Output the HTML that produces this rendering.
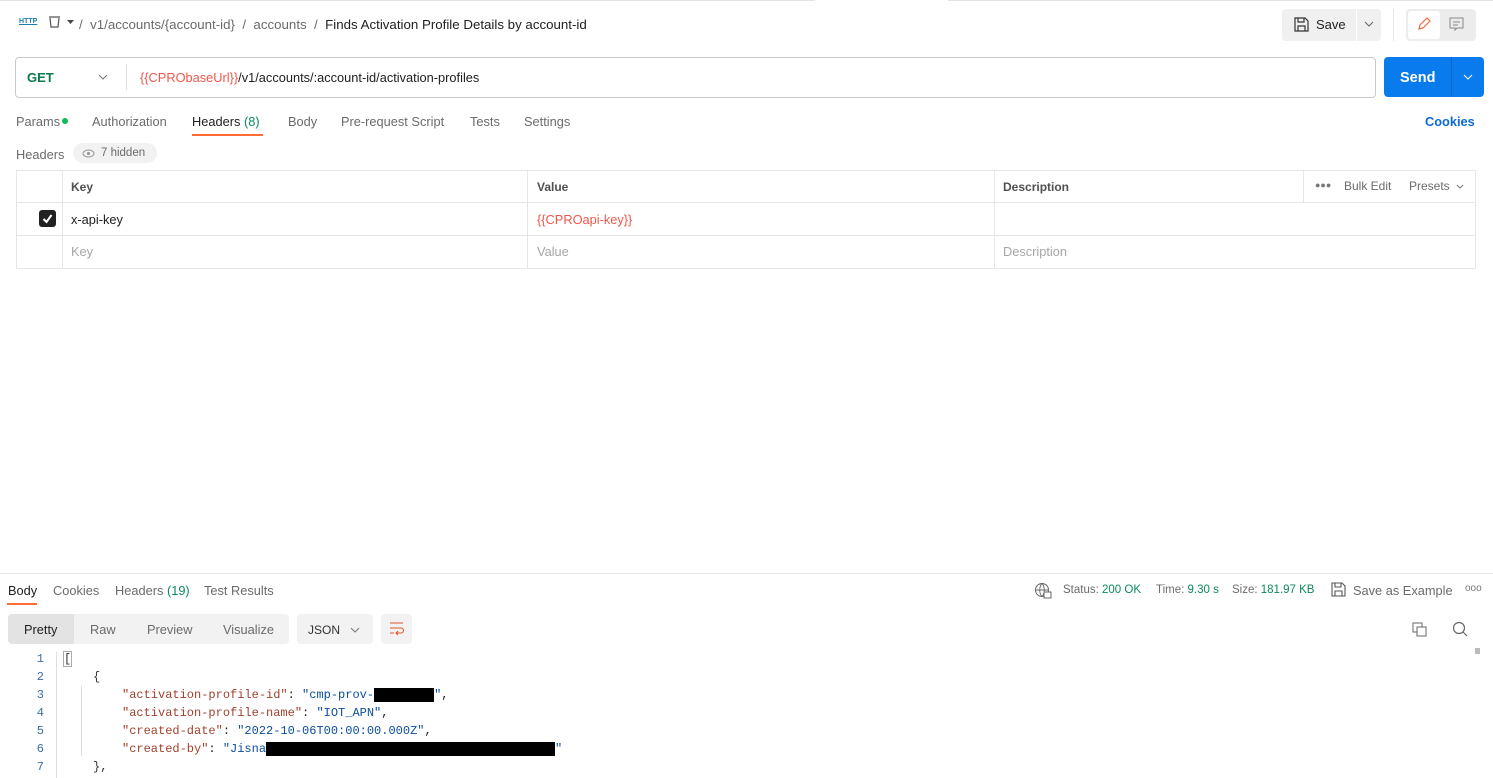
<!DOCTYPE html>
<html><head><meta charset="utf-8"><style>
*{box-sizing:border-box;margin:0;padding:0}
body{width:1493px;height:778px;overflow:hidden;background:#fff;font-family:"Liberation Sans",sans-serif;font-size:12.8px;color:#212121;position:relative}
.a{position:absolute;white-space:nowrap}
.g{color:#6b6b6b}
.mono{font-family:"Liberation Mono",monospace;font-size:12px}
.ln{position:absolute;left:0;width:44px;text-align:right;color:#3a6ea5;font-family:"Liberation Mono",monospace;font-size:12px}
.k{color:#a0412d}.v{color:#0b4ea2}
</style></head><body>
<div class="a" style="left:0;top:0;width:815px;height:1px;background:#e4e4e4"></div>
<div class="a" style="left:948px;top:0;width:545px;height:1px;background:#e4e4e4"></div>
<!-- top breadcrumb -->
<div class="a" style="left:19px;top:18px;font-size:7px;color:#1b7fa6;font-weight:bold;text-decoration:underline">HTTP</div>
<svg class="a" style="left:47px;top:15px" width="30" height="14"><path d="M2 2h11M3 3l1 9h7l1-9" fill="none" stroke="#555" stroke-width="1.2"/><path d="M20 5h7l-3.5 4z" fill="#444"/></svg>
<div class="a" style="left:79px;top:17px;font-size:13.3px"><span class="g">/ &nbsp;v1/accounts/{account-id} &nbsp;/ &nbsp;accounts &nbsp;/ </span>&nbsp;<span style="color:#212121">Finds Activation Profile Details by account-id</span></div>
<!-- save -->
<div class="a" style="left:1282px;top:9px;width:74px;height:32px;background:#f0f0f0;border-radius:4px 0 0 4px"></div>
<div class="a" style="left:1357px;top:9px;width:24px;height:32px;background:#f0f0f0;border-radius:0 4px 4px 0"></div>
<svg class="a" style="left:1294px;top:17px" width="15" height="15"><path d="M1 1h10l3 3v10H1z M4 1v4h6V1 M4 14V9h7v5" fill="none" stroke="#333" stroke-width="1.2"/></svg>
<div class="a" style="left:1316px;top:17px;font-size:13px">Save</div>
<svg class="a" style="left:1364px;top:21px" width="10" height="6"><path d="M1 1l4 4 4-4" fill="none" stroke="#666"/></svg>
<div class="a" style="left:1393px;top:9px;width:1px;height:32px;background:#e6e6e6"></div>
<div class="a" style="left:1406px;top:9px;width:70px;height:32px;background:#ececec;border-radius:4px"></div>
<div class="a" style="left:1408px;top:11px;width:32px;height:28px;background:#fff;border-radius:3px"></div>
<svg class="a" style="left:1416px;top:16px" width="16" height="16"><path d="M3 13l1-4 7-7 3 3-7 7z" fill="none" stroke="#f06b3c" stroke-width="1.2"/></svg>
<svg class="a" style="left:1449px;top:17px" width="15" height="15"><path d="M1 1h13v10H8l-2 2v-2H1z M4 5h7M4 8h5" fill="none" stroke="#888" stroke-width="1"/></svg>
<!-- url bar -->
<div class="a" style="left:15px;top:57px;width:1361px;height:41px;border:1px solid #c9c9c9;border-radius:4px"></div>
<div class="a" style="left:27px;top:70px;font-size:13px;font-weight:bold;color:#0b7a4b">GET</div>
<svg class="a" style="left:98px;top:74px" width="10" height="6"><path d="M1 1l4 4 4-4" fill="none" stroke="#777"/></svg>
<div class="a" style="left:126px;top:64px;width:1px;height:26px;background:#e3e3e3"></div>
<div class="a" style="left:140px;top:70px;font-size:12.8px"><span style="color:#f0574b">{{CPRObaseUrl}}</span>/v1/accounts/:account-id/activation-profiles</div>
<div class="a" style="left:1384px;top:57px;width:100px;height:40px;background:#097bed;border-radius:4px"></div>
<div class="a" style="left:1451px;top:57px;width:1px;height:40px;background:#0867c9"></div>
<div class="a" style="left:1400px;top:70px;color:#fff;font-weight:bold;font-size:14.5px">Send</div>
<svg class="a" style="left:1463px;top:74px" width="10" height="6"><path d="M1 1l4 4 4-4" fill="none" stroke="#fff"/></svg>
<!-- tabs -->
<div class="a g" style="left:16px;top:114px">Params</div>
<div class="a" style="left:62px;top:118px;width:6px;height:6px;border-radius:50%;background:#0cbb52"></div>
<div class="a g" style="left:92px;top:114px">Authorization</div>
<div class="a" style="left:192px;top:114px">Headers <span style="color:#0b8a5b">(8)</span></div>
<div class="a" style="left:192px;top:134px;width:71px;height:2px;background:#ff6c37"></div>
<div class="a g" style="left:288px;top:114px">Body</div>
<div class="a g" style="left:341px;top:114px">Pre-request Script</div>
<div class="a g" style="left:470px;top:114px">Tests</div>
<div class="a g" style="left:524px;top:114px">Settings</div>
<div class="a" style="left:1425px;top:114px;color:#0b6ad6;font-weight:bold">Cookies</div>
<div class="a g" style="left:16px;top:147px">Headers</div>
<div class="a" style="left:73px;top:143px;width:84px;height:20px;background:#f2f2f2;border-radius:10px"></div>
<svg class="a" style="left:82px;top:149px" width="13" height="9"><ellipse cx="6.5" cy="4.5" rx="5.5" ry="3.5" fill="none" stroke="#999"/><circle cx="6.5" cy="4.5" r="1.6" fill="#999"/></svg>
<div class="a g" style="left:101px;top:147px;font-size:11.5px">7 hidden</div>
<!-- table -->
<div class="a" style="left:16px;top:170px;width:1460px;height:99px;border:1px solid #e6e6e6"></div>
<div class="a" style="left:16px;top:202px;width:1460px;height:1px;background:#e6e6e6"></div>
<div class="a" style="left:16px;top:235px;width:1460px;height:1px;background:#e6e6e6"></div>
<div class="a" style="left:62px;top:170px;width:1px;height:99px;background:#e6e6e6"></div>
<div class="a" style="left:527px;top:170px;width:1px;height:99px;background:#e6e6e6"></div>
<div class="a" style="left:994px;top:170px;width:1px;height:99px;background:#e6e6e6"></div>
<div class="a" style="left:1303px;top:170px;width:1px;height:32px;background:#e6e6e6"></div>
<div class="a" style="left:71px;top:180px;color:#505050;font-weight:bold;font-size:12px">Key</div>
<div class="a" style="left:537px;top:180px;color:#505050;font-weight:bold;font-size:12px">Value</div>
<div class="a" style="left:1003px;top:180px;color:#505050;font-weight:bold;font-size:12px">Description</div>
<div class="a" style="left:1315px;top:180px;color:#777;font-size:9px">●●●</div>
<div class="a g" style="left:1344px;top:179px;font-size:12px">Bulk Edit</div>
<div class="a g" style="left:1409px;top:179px;font-size:12px">Presets</div>
<svg class="a" style="left:1456px;top:184px" width="8" height="5"><path d="M1 1l3 3 3-3" fill="none" stroke="#777"/></svg>
<div class="a" style="left:39px;top:210px;width:17px;height:17px;background:#212121;border-radius:3px"></div>
<svg class="a" style="left:41px;top:212px" width="13" height="13"><path d="M2.5 7l3 3 5-7" fill="none" stroke="#fff" stroke-width="2"/></svg>
<div class="a" style="left:71px;top:212px">x-api-key</div>
<div class="a" style="left:537px;top:212px;color:#f0574b">{{CPROapi-key}}</div>
<div class="a" style="left:71px;top:244px;color:#a6a6a6">Key</div>
<div class="a" style="left:537px;top:244px;color:#a6a6a6">Value</div>
<div class="a" style="left:1003px;top:244px;color:#a6a6a6">Description</div>
<!-- response -->
<div class="a" style="left:0;top:573px;width:1493px;height:1px;background:#e6e6e6"></div>
<div class="a" style="left:8px;top:583px">Body</div>
<div class="a" style="left:7px;top:603px;width:30px;height:2px;background:#ff6c37"></div>
<div class="a g" style="left:53px;top:583px">Cookies</div>
<div class="a g" style="left:115px;top:583px">Headers <span style="color:#0b8a5b">(19)</span></div>
<div class="a g" style="left:204px;top:583px">Test Results</div>
<svg class="a" style="left:1034px;top:582px" width="18" height="17"><circle cx="8" cy="8" r="6.5" fill="none" stroke="#666"/><path d="M1.5 8h13M8 1.5c-3 3-3 10 0 13M8 1.5c3 3 3 10 0 13" fill="none" stroke="#666" stroke-width=".9"/><rect x="10" y="10" width="7" height="6" fill="#fff" stroke="#666"/></svg>
<div class="a g" style="left:1063px;top:584px;font-size:11.5px">Status: <span style="color:#0b8a5b">200 OK</span></div>
<div class="a g" style="left:1156px;top:584px;font-size:11.5px">Time: <span style="color:#0b8a5b">9.30 s</span></div>
<div class="a g" style="left:1232px;top:584px;font-size:11.5px">Size: <span style="color:#0b8a5b">181.97 KB</span></div>
<svg class="a" style="left:1331px;top:582px" width="15" height="15"><path d="M1 1h10l3 3v10H1z M4 1v4h6V1 M4 14V9h7v5" fill="none" stroke="#555" stroke-width="1.1"/></svg>
<div class="a g" style="left:1353px;top:583px">Save as Example</div>
<div class="a" style="left:1465px;top:583px;color:#777;font-size:10px">ooo</div>
<div class="a" style="left:8px;top:614px;width:281px;height:30px;background:#f2f2f2;border-radius:4px"></div>
<div class="a" style="left:8px;top:614px;width:66px;height:30px;background:#e3e3e3;border-radius:4px 0 0 4px"></div>
<div class="a" style="left:24px;top:622px">Pretty</div>
<div class="a g" style="left:90px;top:622px">Raw</div>
<div class="a g" style="left:147px;top:622px">Preview</div>
<div class="a g" style="left:223px;top:622px">Visualize</div>
<div class="a" style="left:297px;top:614px;width:76px;height:30px;background:#f2f2f2;border-radius:4px"></div>
<div class="a" style="left:308px;top:623px;font-size:12px;color:#333">JSON</div>
<svg class="a" style="left:350px;top:627px" width="10" height="6"><path d="M1 1l4 4 4-4" fill="none" stroke="#777"/></svg>
<div class="a" style="left:381px;top:614px;width:31px;height:30px;background:#f2f2f2;border-radius:4px"></div>
<svg class="a" style="left:389px;top:621px" width="16" height="15"><path d="M1 2h13M1 7h11a2.5 2.5 0 0 1 0 5H7M9 10l-2 2 2 2M1 12h4" fill="none" stroke="#e0572b" stroke-width="1.1"/></svg>
<svg class="a" style="left:1412px;top:622px" width="16" height="16"><rect x="1" y="1" width="9" height="9" fill="none" stroke="#666"/><rect x="5" y="5" width="9" height="9" fill="#fff" stroke="#666"/></svg>
<svg class="a" style="left:1452px;top:621px" width="16" height="16"><circle cx="7" cy="7" r="5.5" fill="none" stroke="#666" stroke-width="1.2"/><path d="M11 11l4 4" stroke="#666" stroke-width="1.2"/></svg>
<!-- code -->
<div class="ln" style="top:652px">1</div>
<div class="ln" style="top:670px">2</div>
<div class="ln" style="top:688px">3</div>
<div class="ln" style="top:706px">4</div>
<div class="ln" style="top:724px">5</div>
<div class="ln" style="top:742px">6</div>
<div class="ln" style="top:760px">7</div>
<div class="a" style="left:56px;top:652px;width:1px;height:126px;background:#ddd"></div>
<div class="a" style="left:81px;top:686px;width:1px;height:70px;background:#ddd"></div>
<div class="a mono" style="left:64px;top:652px;color:#333;outline:1px solid #aaa">[</div>
<div class="a mono" style="left:93px;top:670px;color:#333">{</div>
<div class="a mono" style="left:122px;top:688px"><span class="k">"activation-profile-id"</span>: <span class="v">"cmp-prov-</span><span style="background:#000;color:#000;display:inline-block;width:60px">&nbsp;</span><span class="v">"</span>,</div>
<div class="a mono" style="left:122px;top:706px"><span class="k">"activation-profile-name"</span>: <span class="v">"IOT_APN"</span>,</div>
<div class="a mono" style="left:122px;top:724px"><span class="k">"created-date"</span>: <span class="v">"2022-10-06T00:00:00.000Z"</span>,</div>
<div class="a mono" style="left:122px;top:742px"><span class="k">"created-by"</span>: <span class="v">"Jisna</span><span style="background:#000;color:#000;display:inline-block;width:289px">&nbsp;</span><span class="v">"</span></div>
<div class="a mono" style="left:93px;top:760px;color:#333">},</div>
<div class="a" style="left:1475px;top:648px;width:5px;height:6px;background:#bbb"></div>
</body></html>
